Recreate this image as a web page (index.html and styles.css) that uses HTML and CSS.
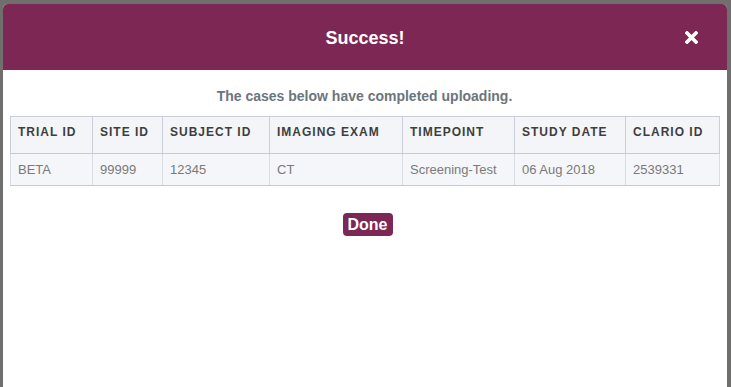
FILE: index.html
```html
<!DOCTYPE html>
<html lang="en">
<head>
<meta charset="utf-8">
<title>Success</title>
<link rel="stylesheet" href="styles.css">
</head>
<body>
<div class="modal">
  <div class="modal-header">
    <span class="spacer"></span>
    <h1 class="modal-title">Success!</h1>
    <button class="close" aria-label="Close">
      <svg width="13" height="13" viewBox="0 0 13 13"><path d="M2 2 L11 11 M11 2 L2 11" stroke="#fff" stroke-width="3.6" stroke-linecap="square" fill="none"/></svg>
    </button>
  </div>
  <div class="modal-body">
    <p class="lead">The cases below have completed uploading.</p>
    <table class="cases">
      <colgroup>
        <col class="c1"><col class="c2"><col class="c3"><col class="c4"><col class="c5"><col class="c6"><col class="c7">
      </colgroup>
      <thead>
        <tr>
          <th>TRIAL ID</th><th>SITE ID</th><th>SUBJECT ID</th><th>IMAGING EXAM</th><th>TIMEPOINT</th><th>STUDY DATE</th><th>CLARIO ID</th>
        </tr>
      </thead>
      <tbody>
        <tr>
          <td>BETA</td><td>99999</td><td>12345</td><td>CT</td><td>Screening-Test</td><td>06 Aug 2018</td><td>2539331</td>
        </tr>
      </tbody>
    </table>
    <div class="actions">
      <button class="btn-done">Done</button>
    </div>
  </div>
</div>
</body>
</html>
```
FILE: styles.css
```css
html, body {
  margin: 0;
  padding: 0;
  height: 100%;
  overflow: hidden;
}
body {
  background: #6f706e;
  font-family: "Liberation Sans", Arial, sans-serif;
}
.modal {
  margin: 4px 4px 0 3px;
  width: 724px;
  height: 400px;
  background: #ffffff;
  border-radius: 5px 5px 0 0;
  overflow: hidden;
}
.modal-header {
  height: 66px;
  background: #7d2854;
  display: grid;
  grid-template-columns: 1fr auto 1fr;
  align-items: center;
}
.modal-title {
  margin: 0;
  color: #ffffff;
  font-size: 18px;
  font-weight: bold;
  line-height: 22px;
  padding-top: 1px;
}
.close {
  justify-self: end;
  margin-right: 29px;
  padding: 0;
  border: 0;
  background: transparent;
  width: 13px;
  height: 13px;
  display: flex;
  cursor: pointer;
}
.modal-body {
  padding: 18px 8px 0 7px;
}
.lead {
  margin: 0 0 12px;
  text-align: center;
  color: #6c757d;
  font-size: 14px;
  font-weight: bold;
  line-height: 16px;
}
.cases {
  width: 709px;
  table-layout: fixed;
  border-collapse: collapse;
  border: 1px solid #c5cad4;
}
.c1 { width: 82px; }
.c2 { width: 70px; }
.c3 { width: 107px; }
.c4 { width: 133px; }
.c5 { width: 112px; }
.c6 { width: 111px; }
.c7 { width: 94px; }
.cases th {
  background: #f3f5f9;
  color: #3e3e3e;
  font-size: 12px;
  font-weight: bold;
  letter-spacing: 1px;
  line-height: 14px;
  text-align: left;
  padding: 8px 7px 14px;
  border: 1px solid #c9ced8;
  white-space: nowrap;
}
.cases td {
  background: #f4f6f9;
  color: #7a7a7a;
  font-size: 13px;
  line-height: 16px;
  padding: 8px 7px 7px;
  border: 1px solid #d9dce2;
  border-bottom-color: #c5cad4;
  white-space: nowrap;
}
.cases thead th {
  border-bottom: 1px solid #c5cad4;
}
.actions {
  display: flex;
  justify-content: center;
  margin-top: 27px;
}
.btn-done {
  margin-left: 6px;
  background: #7d2854;
  color: #ffffff;
  font-family: "Liberation Sans", Arial, sans-serif;
  font-size: 16px;
  font-weight: bold;
  line-height: 19px;
  padding: 2px 5px;
  border: 0;
  border-radius: 4px;
  cursor: pointer;
}
```
